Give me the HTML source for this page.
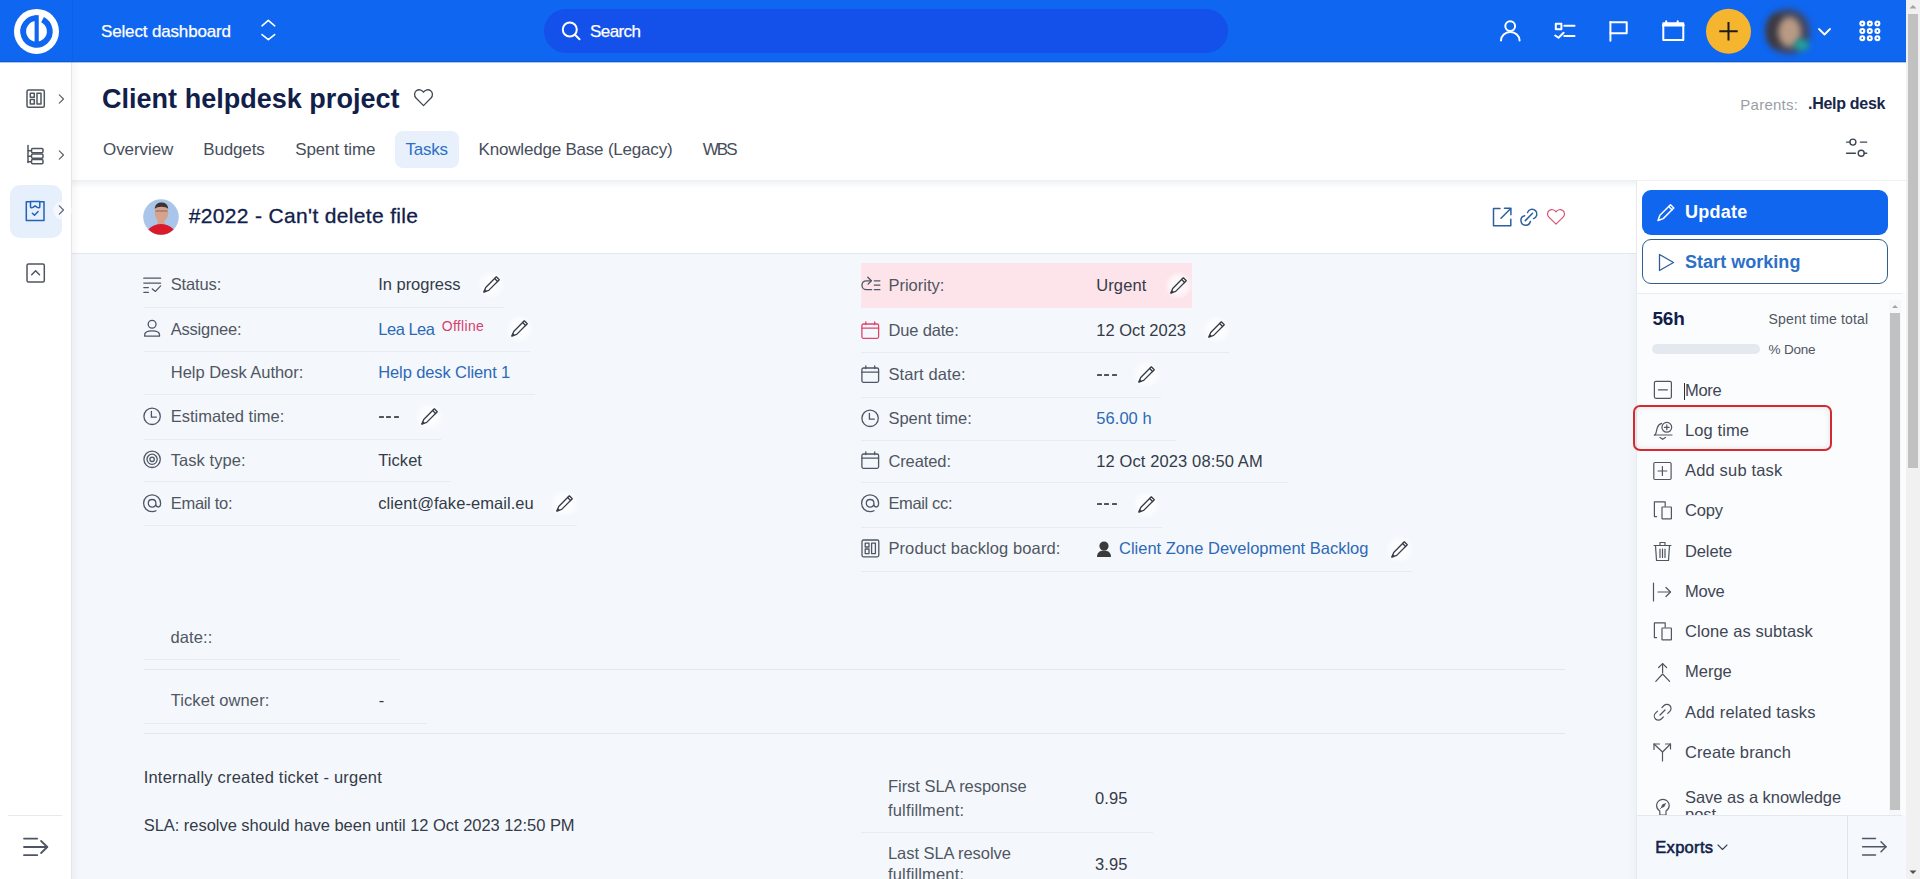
<!DOCTYPE html>
<html><head><meta charset="utf-8">
<style>
*{box-sizing:border-box;margin:0;padding:0}
html,body{width:1920px;height:879px;overflow:hidden;background:#fff;font-family:"Liberation Sans",sans-serif}
.a{position:absolute;white-space:nowrap}
svg{position:absolute;overflow:visible}
</style></head>
<body>
<div class="a" style="left:0px;top:0px;width:1906px;height:62px;background:#0f66f0;"></div>
<div class="a" style="left:544px;top:9px;width:684px;height:44px;background:#1450ea;border-radius:22px;"></div>
<div class="a" style="left:72px;top:0px;width:1px;height:62px;background:rgba(0,40,120,0.10);"></div>
<div class="a" style="left:0px;top:62px;width:72px;height:817px;background:#ffffff;"></div>
<div class="a" style="left:71px;top:62px;width:1px;height:817px;background:#e4e6ea;"></div>
<div class="a" style="left:72px;top:62px;width:1834px;height:118px;background:#ffffff;"></div>
<div class="a" style="left:72px;top:180px;width:1564px;height:699px;background:#f4f8fd;"></div>
<div class="a" style="left:72px;top:180px;width:1564px;height:73px;background:#ffffff;"></div>
<div class="a" style="left:72px;top:253px;width:1564px;height:1px;background:#e3e8ef;"></div>
<div class="a" style="left:72px;top:180px;width:1564px;height:8px;background:linear-gradient(#eef0f3,rgba(255,255,255,0));"></div>
<div class="a" style="left:1636px;top:180px;width:270px;height:699px;background:#fbfcfe;"></div>
<div class="a" style="left:1637px;top:180px;width:269px;height:113px;background:#ffffff;"></div>
<div class="a" style="left:1628px;top:253px;width:8px;height:626px;background:linear-gradient(90deg,rgba(0,0,0,0),rgba(0,0,0,0.025));"></div>
<div class="a" style="left:1636px;top:180px;width:1px;height:699px;background:#e6eaf0;"></div>
<div class="a" style="left:1637px;top:180px;width:269px;height:1px;background:#eef0f3;"></div>
<div class="a" style="left:1906px;top:0px;width:14px;height:879px;background:#f1f1f1;"></div>
<div class="a" style="left:0px;top:61px;width:1906px;height:1px;background:#0c5bd6;"></div>
<div class="a" style="left:0px;top:62px;width:1906px;height:1px;background:rgba(12,91,214,0.35);"></div>
<div class="a" style="left:72px;top:62px;width:8px;height:817px;background:linear-gradient(90deg,rgba(0,0,0,0.035),rgba(0,0,0,0));"></div>
<svg style="left:0;top:0" width="80" height="62" viewBox="0 0 80 62"><circle cx="36.5" cy="31.4" r="22.5" fill="#fff"/><path d="M36.5 18.1 A13.3 13.3 0 1 0 42.54 19.55" fill="none" stroke="#0f66f0" stroke-width="5.9"/><rect x="34.6" y="15.2" width="4.15" height="27" fill="#0f66f0"/></svg>
<div class="a" style="left:101.00px;top:23.11px;font-size:17px;line-height:17px;color:#ffffff;letter-spacing:-0.153px;font-weight:normal;-webkit-text-stroke:0.25px #fff;">Select dashboard</div>
<svg style="left:255px;top:15px" width="30" height="30" viewBox="0 0 30 30" fill="none" stroke="#ffffff" stroke-width="1.6" stroke-linecap="round" stroke-linejoin="round"><path d="M7 10.8 L13.3 5.4 L19.7 10.8"/><path d="M7 19.6 L13.3 24.7 L19.7 19.6"/></svg>
<svg style="left:555px;top:15px" width="35" height="35" viewBox="0 0 35 35" fill="none" stroke="#ffffff" stroke-width="2" stroke-linecap="round" stroke-linejoin="round"><circle cx="14.8" cy="14.5" r="7"/><path d="M20 19.8 L24.5 24.3"/></svg>
<div class="a" style="left:590.00px;top:23.11px;font-size:17px;line-height:17px;color:#ffffff;letter-spacing:-0.572px;-webkit-text-stroke:0.25px #fff;">Search</div>
<svg style="left:1495px;top:15px" width="30" height="30" viewBox="0 0 30 30" fill="none" stroke="#ffffff" stroke-width="2" stroke-linecap="round" stroke-linejoin="round"><circle cx="15.2" cy="11.1" r="4.9"/><path d="M6 25.6 A9.3 8.6 0 0 1 24.6 25.6"/></svg>
<svg style="left:1550px;top:15px" width="30" height="30" viewBox="0 0 30 30" fill="none" stroke="#ffffff" stroke-width="2" stroke-linecap="round" stroke-linejoin="round"><rect x="5.8" y="8.7" width="5.6" height="5.6"/><path d="M14.3 10.8 H24.5"/><path d="M14.3 20.9 H24.5"/><path d="M5.2 20.5 L8.5 22.8 L13.6 17.7"/></svg>
<svg style="left:1604px;top:15px" width="30" height="30" viewBox="0 0 30 30" fill="none" stroke="#ffffff" stroke-width="2" stroke-linecap="round" stroke-linejoin="round"><path d="M6.4 25.7 V7"/><path d="M6.4 7.2 H22.7 V18.2 H6.4"/></svg>
<svg style="left:1658px;top:15px" width="30" height="30" viewBox="0 0 30 30" fill="none" stroke="#ffffff" stroke-width="2" stroke-linecap="round" stroke-linejoin="round"><rect x="5.3" y="8.2" width="20" height="16.9"/><path d="M5.3 10.3 H25.3" stroke-width="2.6"/><path d="M8.2 6.2 V8.5"/><path d="M19.7 6.2 V8.5"/></svg>
<svg style="left:1700px;top:4px" width="56" height="56" viewBox="0 0 56 56"><circle cx="28.5" cy="27.3" r="22.5" fill="#f5b52f"/><path d="M19.3 27.3 H37.7 M28.5 18.1 V36.5" stroke="#1d1d1d" stroke-width="2"/></svg>
<div class="a" style="left:1766px;top:9px;width:44px;height:45px;border-radius:50%;background:#414660;filter:blur(3px)"></div>
<div class="a" style="left:1767px;top:14px;width:20px;height:34px;border-radius:50%;background:#3a3942;filter:blur(3px)"></div>
<div class="a" style="left:1778px;top:17px;width:23px;height:30px;border-radius:50%;background:#b99a83;filter:blur(3px)"></div>
<div class="a" style="left:1794px;top:39px;width:15px;height:12px;border-radius:50%;background:#1fa59c;filter:blur(3px)"></div>
<svg style="left:1815px;top:25px" width="20" height="14" viewBox="0 0 20 14" fill="none" stroke="#ffffff" stroke-width="1.8" stroke-linecap="round" stroke-linejoin="round"><path d="M4 4 L9.5 9.5 L15 4"/></svg>
<svg style="left:1855px;top:15px" width="30" height="30" viewBox="0 0 30 30" fill="none" stroke="#ffffff" stroke-width="2.1" stroke-linecap="round" stroke-linejoin="round"><circle cx="7.3" cy="8.6" r="1.95"/><circle cx="7.3" cy="16" r="1.95"/><circle cx="7.3" cy="23.2" r="1.95"/><circle cx="14.8" cy="8.6" r="1.95"/><circle cx="14.8" cy="16" r="1.95"/><circle cx="14.8" cy="23.2" r="1.95"/><circle cx="22.4" cy="8.6" r="1.95"/><circle cx="22.4" cy="16" r="1.95"/><circle cx="22.4" cy="23.2" r="1.95"/></svg>
<div class="a" style="left:10px;top:185px;width:52px;height:53px;background:#e6effc;border-radius:10px;"></div>
<svg style="left:22px;top:85px" width="28" height="28" viewBox="0 0 28 28" fill="none" stroke="#50565f" stroke-width="1.5" stroke-linecap="round" stroke-linejoin="round"><rect x="5" y="5" width="17.3" height="17.3" rx="1.5"/><rect x="8.3" y="8.3" width="4" height="4"/><rect x="8.3" y="14.5" width="4" height="4.5"/><rect x="15" y="8.3" width="4" height="10.7"/></svg>
<svg style="left:22px;top:141px" width="28" height="28" viewBox="0 0 28 28" fill="none" stroke="#50565f" stroke-width="1.5" stroke-linecap="round" stroke-linejoin="round"><path d="M6 4.5 V21.5"/><path d="M6 9.7 H9 M6 15.2 H9 M6 20.7 H9"/><rect x="9.5" y="7.5" width="11.5" height="4.2" rx="1.2"/><rect x="9.5" y="13" width="11.5" height="4.2" rx="1.2"/><rect x="9.5" y="18.5" width="11.5" height="4.2" rx="1.2"/></svg>
<div class="a" style="left:53px;top:201px;width:19px;height:19px;border-radius:50%;background:rgba(255,255,255,0.55)"></div>
<svg style="left:22px;top:197px" width="28" height="28" viewBox="0 0 28 28" fill="none" stroke="#2462b6" stroke-width="1.5" stroke-linecap="round" stroke-linejoin="round"><path d="M8.5 4.8 H4.3 V23.4 H22 V4.8 H17.8"/><path d="M8.5 4.5 V9.8 C8.5 11 10 11.2 11 10.3 L13.1 8.8 L15.3 10.3 C16.3 11.2 17.8 11 17.8 9.8 V4.5 Z"/><path d="M10.4 16.2 L12.5 18.3 L16.1 14.5"/></svg>
<svg style="left:22px;top:259px" width="28" height="28" viewBox="0 0 28 28" fill="none" stroke="#50565f" stroke-width="1.5" stroke-linecap="round" stroke-linejoin="round"><rect x="5" y="5" width="17.3" height="18" rx="1.5"/><path d="M9.7 15.7 L13.6 11.8 L17.5 15.7"/></svg>
<svg style="left:54px;top:89.8px" width="14" height="18" viewBox="0 0 14 18" fill="none" stroke="#60656e" stroke-width="1.2" stroke-linecap="round" stroke-linejoin="round"><path d="M5.3 4.8 L9.5 9 L5.3 13.2"/></svg>
<svg style="left:54px;top:145.8px" width="14" height="18" viewBox="0 0 14 18" fill="none" stroke="#60656e" stroke-width="1.2" stroke-linecap="round" stroke-linejoin="round"><path d="M5.3 4.8 L9.5 9 L5.3 13.2"/></svg>
<svg style="left:54px;top:201.3px" width="14" height="18" viewBox="0 0 14 18" fill="none" stroke="#60656e" stroke-width="1.2" stroke-linecap="round" stroke-linejoin="round"><path d="M5.3 4.8 L9.5 9 L5.3 13.2"/></svg>
<div class="a" style="left:8px;top:815px;width:54px;height:1px;background:#e5e8ed;"></div>
<svg style="left:20px;top:833px" width="32" height="28" viewBox="0 0 32 28" fill="none" stroke="#4f5663" stroke-width="1.8" stroke-linecap="round" stroke-linejoin="round"><path d="M4 5.6 H17.2"/><path d="M4 14 H27.3"/><path d="M4 22.2 H17.2"/><path d="M21.1 8 L27.3 14 L21.1 20"/></svg>
<div class="a" style="left:102.00px;top:86.34px;font-size:27px;line-height:27px;color:#10204a;font-weight:bold;letter-spacing:0.019px;">Client helpdesk project</div>
<svg style="left:413.5px;top:89.3px" width="19" height="17" viewBox="0 0 19 17" fill="none" stroke="#3e4654" stroke-width="1.3" stroke-linecap="round" stroke-linejoin="round"><path d="M9.5 16.6 L2 9 C0 7 0.1 3.3 2.3 1.7 C4.5 0.1 7.9 0.6 9.5 3.2 C11.1 0.6 14.5 0.1 16.7 1.7 C18.9 3.3 19 7 17 9 Z"/></svg>
<div class="a" style="left:1740.30px;top:96.80px;font-size:15px;line-height:15px;color:#999ea5;letter-spacing:0.246px;">Parents:</div>
<div class="a" style="left:1808.00px;top:95.96px;font-size:16px;line-height:16px;color:#17264a;font-weight:bold;letter-spacing:-0.290px;">.Help desk</div>
<div class="a" style="left:395px;top:131px;width:64px;height:37px;background:#e8f0fc;border-radius:8px;"></div>
<div class="a" style="left:103.00px;top:140.81px;font-size:17px;line-height:17px;color:#474e5b;letter-spacing:-0.078px;">Overview</div>
<div class="a" style="left:203.20px;top:140.81px;font-size:17px;line-height:17px;color:#474e5b;letter-spacing:-0.129px;">Budgets</div>
<div class="a" style="left:295.30px;top:140.81px;font-size:17px;line-height:17px;color:#474e5b;letter-spacing:-0.128px;">Spent time</div>
<div class="a" style="left:405.40px;top:140.81px;font-size:17px;line-height:17px;color:#2c6fc7;letter-spacing:-0.213px;">Tasks</div>
<div class="a" style="left:478.60px;top:140.81px;font-size:17px;line-height:17px;color:#474e5b;letter-spacing:-0.202px;">Knowledge Base (Legacy)</div>
<div class="a" style="left:702.70px;top:140.81px;font-size:17px;line-height:17px;color:#474e5b;letter-spacing:-1.867px;">WBS</div>
<svg style="left:1843px;top:135px" width="28" height="26" viewBox="0 0 28 26" fill="none" stroke="#3e4654" stroke-width="1.4" stroke-linecap="round" stroke-linejoin="round"><circle cx="9.9" cy="7.1" r="3"/><path d="M17.4 7.1 H23.7"/><path d="M3.6 18.2 H12.4"/><circle cx="18.2" cy="18.2" r="3"/><path d="M3.6 7.1 H6.9"/><path d="M21.2 18.2 H23.7"/></svg>
<svg style="left:143px;top:199px" width="36" height="36" viewBox="143 199 36 36"><defs><clipPath id="avc"><circle cx="161" cy="217" r="17.8"/></clipPath></defs><g clip-path="url(#avc)"><rect x="143" y="199" width="36" height="36" fill="#a9c6ea"/><ellipse cx="161" cy="240.5" rx="17" ry="16.5" fill="#d81a2a"/><rect x="157.5" y="218" width="7" height="6" fill="#d9a08c"/><ellipse cx="161.5" cy="213" rx="6.8" ry="8.6" fill="#d6a28c"/><path d="M154.8 209 C155 204 158 202.5 161.5 202.5 C165 202.5 168 204 168.2 209 C166 206 157 206 154.8 209 Z" fill="#3b3432"/><path d="M155.5 211 H167.5" stroke="#7a5f58" stroke-width="0.9"/></g></svg>
<div class="a" style="left:188.75px;top:205.22px;font-size:21px;line-height:21px;color:#10204a;letter-spacing:0.339px;-webkit-text-stroke:0.3px #10204a;">#2022 - Can't delete file</div>
<svg style="left:1488px;top:203px" width="28" height="26" viewBox="0 0 28 26" fill="none" stroke="#2d5f9f" stroke-width="1.5" stroke-linecap="round" stroke-linejoin="round"><path d="M12 5.5 H5.5 V22.8 H22.8 V16.3"/><path d="M13 15.2 L22.5 5.7"/><path d="M16.5 5.3 H22.9 V11.7"/></svg>
<svg style="left:1518px;top:206px" width="22" height="22" viewBox="0 0 22 22" fill="none" stroke="#2d5f9f" stroke-width="1.5" stroke-linecap="round" stroke-linejoin="round"><path d="M7.3 14.6 L14.6 7.3"/><path d="M6.6 9.7 A4.8 4.8 0 1 0 12.4 15.5"/><path d="M9.5 6.6 A4.8 4.8 0 1 1 15.5 12.6"/></svg>
<svg style="left:1547px;top:209px" width="18" height="16" viewBox="0 0 18 16" fill="none" stroke="#d9547b" stroke-width="1.2" stroke-linecap="round" stroke-linejoin="round"><path d="M9 15.2 L1.9 8.1 C0 6.2 0.1 3 2.2 1.5 C4.3 0 7.4 0.5 9 2.8 C10.6 0.5 13.7 0 15.8 1.5 C17.9 3 18 6.2 16.1 8.1 Z"/></svg>
<svg style="left:143px;top:274.7px" width="20" height="20" viewBox="0 0 20 20" fill="none" stroke="#4f5663" stroke-width="1.3" stroke-linecap="round" stroke-linejoin="round"><path d="M0.8 3.2 H17.6"/><path d="M0.8 8.1 H17.6"/><path d="M0.8 12.6 H5.4"/><path d="M0.8 17.3 H5.4"/><path d="M9.3 13.9 L12.5 16.4 L17.6 10.9"/></svg>
<div class="a" style="left:170.75px;top:275.93px;font-size:16.5px;line-height:16.5px;color:#50565f;letter-spacing:-0.138px;">Status:</div>
<div class="a" style="left:378.25px;top:275.93px;font-size:16.5px;line-height:16.5px;color:#353b47;letter-spacing:-0.032px;">In progress</div>
<div class="a" style="left:475.5px;top:269px;width:31px;height:31px;border-radius:50%;background:radial-gradient(circle,rgba(255,255,255,0.7) 35%,rgba(255,255,255,0) 65%)"></div>
<svg style="left:480.5px;top:274px" width="22" height="22" viewBox="0 0 22 22" fill="none" stroke="#353b45" stroke-width="1.3" stroke-linecap="round" stroke-linejoin="round"><path d="M3 18 L4.72 13.42 L15.32 2.82 L18.28 5.78 L7.68 16.38 Z"/><path d="M13.62 4.52 L16.58 7.48"/><path d="M3 18 L3.7 15.9 L5.1 17.3 Z" fill="#353b45"/></svg>
<div class="a" style="left:144px;top:307px;width:360px;height:1px;background:#e8ecf2;"></div>
<svg style="left:143px;top:319.8px" width="20" height="20" viewBox="0 0 20 20" fill="none" stroke="#4f5663" stroke-width="1.3" stroke-linecap="round" stroke-linejoin="round"><circle cx="9.1" cy="4.3" r="3.9"/><path d="M1.7 16.2 V14.8 C1.7 12.3 4.8 10.8 9.1 10.8 C13.4 10.8 16.5 12.3 16.5 14.8 V16.2 Z"/></svg>
<div class="a" style="left:170.75px;top:321.03px;font-size:16.5px;line-height:16.5px;color:#50565f;letter-spacing:-0.217px;">Assignee:</div>
<div class="a" style="left:378.25px;top:321.03px;font-size:16.5px;line-height:16.5px;color:#2d69b5;letter-spacing:-0.485px;">Lea Lea</div>
<div class="a" style="left:504px;top:313px;width:31px;height:31px;border-radius:50%;background:radial-gradient(circle,rgba(255,255,255,0.7) 35%,rgba(255,255,255,0) 65%)"></div>
<svg style="left:509px;top:318px" width="22" height="22" viewBox="0 0 22 22" fill="none" stroke="#353b45" stroke-width="1.3" stroke-linecap="round" stroke-linejoin="round"><path d="M3 18 L4.72 13.42 L15.32 2.82 L18.28 5.78 L7.68 16.38 Z"/><path d="M13.62 4.52 L16.58 7.48"/><path d="M3 18 L3.7 15.9 L5.1 17.3 Z" fill="#353b45"/></svg>
<div class="a" style="left:144px;top:351px;width:386px;height:1px;background:#e8ecf2;"></div>
<div class="a" style="left:170.75px;top:364.03px;font-size:16.5px;line-height:16.5px;color:#50565f;letter-spacing:-0.028px;">Help Desk Author:</div>
<div class="a" style="left:378.25px;top:364.03px;font-size:16.5px;line-height:16.5px;color:#2d69b5;letter-spacing:-0.110px;">Help desk Client 1</div>
<div class="a" style="left:144px;top:394px;width:391px;height:1px;background:#e8ecf2;"></div>
<svg style="left:143px;top:406.8px" width="20" height="20" viewBox="0 0 20 20" fill="none" stroke="#4f5663" stroke-width="1.3" stroke-linecap="round" stroke-linejoin="round"><circle cx="9.1" cy="9.3" r="8.2"/><path d="M8.4 4.3 V10.2 H13.3"/></svg>
<div class="a" style="left:170.75px;top:408.03px;font-size:16.5px;line-height:16.5px;color:#50565f;letter-spacing:-0.012px;">Estimated time:</div>
<div class="a" style="left:379.0px;top:416px;width:5.2px;height:2px;background:#50555f;border-radius:0.5px;"></div>
<div class="a" style="left:386.3px;top:416px;width:5.2px;height:2px;background:#50555f;border-radius:0.5px;"></div>
<div class="a" style="left:393.6px;top:416px;width:5.2px;height:2px;background:#50555f;border-radius:0.5px;"></div>
<div class="a" style="left:414.25px;top:401px;width:31px;height:31px;border-radius:50%;background:radial-gradient(circle,rgba(255,255,255,0.7) 35%,rgba(255,255,255,0) 65%)"></div>
<svg style="left:419.25px;top:406px" width="22" height="22" viewBox="0 0 22 22" fill="none" stroke="#353b45" stroke-width="1.3" stroke-linecap="round" stroke-linejoin="round"><path d="M3 18 L4.72 13.42 L15.32 2.82 L18.28 5.78 L7.68 16.38 Z"/><path d="M13.62 4.52 L16.58 7.48"/><path d="M3 18 L3.7 15.9 L5.1 17.3 Z" fill="#353b45"/></svg>
<div class="a" style="left:144px;top:439px;width:297px;height:1px;background:#e8ecf2;"></div>
<svg style="left:143px;top:450.3px" width="20" height="20" viewBox="0 0 20 20" fill="none" stroke="#4f5663" stroke-width="1.3" stroke-linecap="round" stroke-linejoin="round"><circle cx="9.1" cy="9.3" r="8.2"/><circle cx="9.1" cy="9.3" r="5.1"/><circle cx="9.1" cy="9.3" r="2.2"/></svg>
<div class="a" style="left:170.75px;top:451.53px;font-size:16.5px;line-height:16.5px;color:#50565f;letter-spacing:0.050px;">Task type:</div>
<div class="a" style="left:378.25px;top:451.53px;font-size:16.5px;line-height:16.5px;color:#353b47;letter-spacing:0.062px;">Ticket</div>
<div class="a" style="left:144px;top:481px;width:307px;height:1px;background:#e8ecf2;"></div>
<svg style="left:143px;top:493.55px" width="20" height="20" viewBox="0 0 20 20" fill="none" stroke="#4f5663" stroke-width="1.3" stroke-linecap="round" stroke-linejoin="round"><path d="M12.9 9.3 C12.9 11.5 11.3 13.1 9.1 13.1 C6.9 13.1 5.3 11.5 5.3 9.3 C5.3 7.1 6.9 5.5 9.1 5.5 C11.3 5.5 12.9 7.1 12.9 9.3 V10.6 C12.9 12 13.8 13 15.2 13 C16.8 13 17.6 11.5 17.6 9.3 C17.6 4.6 13.8 0.9 9.1 0.9 C4.4 0.9 0.6 4.6 0.6 9.3 C0.6 14 4.4 17.7 9.1 17.7 C10.6 17.7 11.9 17.4 13 16.8"/></svg>
<div class="a" style="left:170.75px;top:494.78px;font-size:16.5px;line-height:16.5px;color:#50565f;letter-spacing:-0.309px;">Email to:</div>
<div class="a" style="left:378.25px;top:494.78px;font-size:16.5px;line-height:16.5px;color:#353b47;letter-spacing:0.063px;">client@fake-email.eu</div>
<div class="a" style="left:548.75px;top:488px;width:31px;height:31px;border-radius:50%;background:radial-gradient(circle,rgba(255,255,255,0.7) 35%,rgba(255,255,255,0) 65%)"></div>
<svg style="left:553.75px;top:493px" width="22" height="22" viewBox="0 0 22 22" fill="none" stroke="#353b45" stroke-width="1.3" stroke-linecap="round" stroke-linejoin="round"><path d="M3 18 L4.72 13.42 L15.32 2.82 L18.28 5.78 L7.68 16.38 Z"/><path d="M13.62 4.52 L16.58 7.48"/><path d="M3 18 L3.7 15.9 L5.1 17.3 Z" fill="#353b45"/></svg>
<div class="a" style="left:144px;top:525px;width:433px;height:1px;background:#e8ecf2;"></div>
<div class="a" style="left:441.75px;top:319.15px;font-size:14px;line-height:14px;color:#d8416f;letter-spacing:0.299px;">Offline</div>
<div class="a" style="left:861px;top:263px;width:331px;height:45px;background:#fde4ea;"></div>
<svg style="left:861px;top:275.40000000000003px" width="20" height="20" viewBox="0 0 20 20" fill="none" stroke="#4f5663" stroke-width="1.3" stroke-linecap="round" stroke-linejoin="round"><path d="M10.3 5.8 H5.5 C2.8 5.8 1 7.7 1 10.2 C1 12.7 2.8 14.7 5.5 14.7 H10.6"/><path d="M6.8 2.2 L10.3 5.7 L7.1 9.1"/><path d="M13.3 5.8 H18.9 M13.3 10.1 H18.9 M13.3 14.7 H18.9"/></svg>
<div class="a" style="left:888.40px;top:276.63px;font-size:16.5px;line-height:16.5px;color:#50565f;">Priority:</div>
<div class="a" style="left:1096.25px;top:276.63px;font-size:16.5px;line-height:16.5px;color:#353b47;letter-spacing:0.097px;">Urgent</div>
<div class="a" style="left:1162.7px;top:269.6px;width:31px;height:31px;border-radius:50%;background:radial-gradient(circle,rgba(255,255,255,0.7) 35%,rgba(255,255,255,0) 65%)"></div>
<svg style="left:1167.7px;top:274.6px" width="22" height="22" viewBox="0 0 22 22" fill="none" stroke="#353b45" stroke-width="1.3" stroke-linecap="round" stroke-linejoin="round"><path d="M3 18 L4.72 13.42 L15.32 2.82 L18.28 5.78 L7.68 16.38 Z"/><path d="M13.62 4.52 L16.58 7.48"/><path d="M3 18 L3.7 15.9 L5.1 17.3 Z" fill="#353b45"/></svg>
<svg style="left:861px;top:320.5px" width="20" height="20" viewBox="0 0 20 20" fill="none" stroke="#e0446c" stroke-width="1.3" stroke-linecap="round" stroke-linejoin="round"><rect x="0.9" y="3" width="16.7" height="14.3" rx="1.5"/><path d="M0.9 7.2 H17.6"/><path d="M4.8 0.8 V3.5 M13.7 0.8 V3.5"/></svg>
<div class="a" style="left:888.40px;top:321.73px;font-size:16.5px;line-height:16.5px;color:#50565f;letter-spacing:-0.152px;">Due date:</div>
<div class="a" style="left:1096.25px;top:321.73px;font-size:16.5px;line-height:16.5px;color:#353b47;letter-spacing:-0.014px;">12 Oct 2023</div>
<div class="a" style="left:1201px;top:314px;width:31px;height:31px;border-radius:50%;background:radial-gradient(circle,rgba(255,255,255,0.7) 35%,rgba(255,255,255,0) 65%)"></div>
<svg style="left:1206px;top:319px" width="22" height="22" viewBox="0 0 22 22" fill="none" stroke="#353b45" stroke-width="1.3" stroke-linecap="round" stroke-linejoin="round"><path d="M3 18 L4.72 13.42 L15.32 2.82 L18.28 5.78 L7.68 16.38 Z"/><path d="M13.62 4.52 L16.58 7.48"/><path d="M3 18 L3.7 15.9 L5.1 17.3 Z" fill="#353b45"/></svg>
<div class="a" style="left:861px;top:352px;width:368px;height:1px;background:#e8ecf2;"></div>
<svg style="left:861px;top:364.7px" width="20" height="20" viewBox="0 0 20 20" fill="none" stroke="#4f5663" stroke-width="1.3" stroke-linecap="round" stroke-linejoin="round"><rect x="0.9" y="3" width="16.7" height="14.3" rx="1.5"/><path d="M0.9 7.2 H17.6"/><path d="M4.8 0.8 V3.5 M13.7 0.8 V3.5"/></svg>
<div class="a" style="left:888.40px;top:365.93px;font-size:16.5px;line-height:16.5px;color:#50565f;letter-spacing:0.112px;">Start date:</div>
<div class="a" style="left:1097.0px;top:374px;width:5.2px;height:2px;background:#50555f;border-radius:0.5px;"></div>
<div class="a" style="left:1104.3px;top:374px;width:5.2px;height:2px;background:#50555f;border-radius:0.5px;"></div>
<div class="a" style="left:1111.6px;top:374px;width:5.2px;height:2px;background:#50555f;border-radius:0.5px;"></div>
<div class="a" style="left:1131.4px;top:359px;width:31px;height:31px;border-radius:50%;background:radial-gradient(circle,rgba(255,255,255,0.7) 35%,rgba(255,255,255,0) 65%)"></div>
<svg style="left:1136.4px;top:364px" width="22" height="22" viewBox="0 0 22 22" fill="none" stroke="#353b45" stroke-width="1.3" stroke-linecap="round" stroke-linejoin="round"><path d="M3 18 L4.72 13.42 L15.32 2.82 L18.28 5.78 L7.68 16.38 Z"/><path d="M13.62 4.52 L16.58 7.48"/><path d="M3 18 L3.7 15.9 L5.1 17.3 Z" fill="#353b45"/></svg>
<div class="a" style="left:861px;top:397px;width:300px;height:1px;background:#e8ecf2;"></div>
<svg style="left:861px;top:408.5px" width="20" height="20" viewBox="0 0 20 20" fill="none" stroke="#4f5663" stroke-width="1.3" stroke-linecap="round" stroke-linejoin="round"><circle cx="9.1" cy="9.3" r="8.2"/><path d="M8.4 4.3 V10.2 H13.3"/></svg>
<div class="a" style="left:888.40px;top:409.73px;font-size:16.5px;line-height:16.5px;color:#50565f;">Spent time:</div>
<div class="a" style="left:1096.25px;top:409.73px;font-size:16.5px;line-height:16.5px;color:#2d69b5;letter-spacing:0.064px;">56.00 h</div>
<div class="a" style="left:861px;top:440px;width:315px;height:1px;background:#e8ecf2;"></div>
<svg style="left:861px;top:451.3px" width="20" height="20" viewBox="0 0 20 20" fill="none" stroke="#4f5663" stroke-width="1.3" stroke-linecap="round" stroke-linejoin="round"><rect x="0.9" y="3" width="16.7" height="14.3" rx="1.5"/><path d="M0.9 7.2 H17.6"/><path d="M4.8 0.8 V3.5 M13.7 0.8 V3.5"/></svg>
<div class="a" style="left:888.40px;top:452.53px;font-size:16.5px;line-height:16.5px;color:#50565f;letter-spacing:-0.095px;">Created:</div>
<div class="a" style="left:1096.25px;top:452.53px;font-size:16.5px;line-height:16.5px;color:#353b47;letter-spacing:0.115px;">12 Oct 2023 08:50 AM</div>
<div class="a" style="left:861px;top:482px;width:427px;height:1px;background:#e8ecf2;"></div>
<svg style="left:861px;top:494.2px" width="20" height="20" viewBox="0 0 20 20" fill="none" stroke="#4f5663" stroke-width="1.3" stroke-linecap="round" stroke-linejoin="round"><path d="M12.9 9.3 C12.9 11.5 11.3 13.1 9.1 13.1 C6.9 13.1 5.3 11.5 5.3 9.3 C5.3 7.1 6.9 5.5 9.1 5.5 C11.3 5.5 12.9 7.1 12.9 9.3 V10.6 C12.9 12 13.8 13 15.2 13 C16.8 13 17.6 11.5 17.6 9.3 C17.6 4.6 13.8 0.9 9.1 0.9 C4.4 0.9 0.6 4.6 0.6 9.3 C0.6 14 4.4 17.7 9.1 17.7 C10.6 17.7 11.9 17.4 13 16.8"/></svg>
<div class="a" style="left:888.40px;top:495.43px;font-size:16.5px;line-height:16.5px;color:#50565f;letter-spacing:-0.353px;">Email cc:</div>
<div class="a" style="left:1097.0px;top:503px;width:5.2px;height:2px;background:#50555f;border-radius:0.5px;"></div>
<div class="a" style="left:1104.3px;top:503px;width:5.2px;height:2px;background:#50555f;border-radius:0.5px;"></div>
<div class="a" style="left:1111.6px;top:503px;width:5.2px;height:2px;background:#50555f;border-radius:0.5px;"></div>
<div class="a" style="left:1131.4px;top:489px;width:31px;height:31px;border-radius:50%;background:radial-gradient(circle,rgba(255,255,255,0.7) 35%,rgba(255,255,255,0) 65%)"></div>
<svg style="left:1136.4px;top:494px" width="22" height="22" viewBox="0 0 22 22" fill="none" stroke="#353b45" stroke-width="1.3" stroke-linecap="round" stroke-linejoin="round"><path d="M3 18 L4.72 13.42 L15.32 2.82 L18.28 5.78 L7.68 16.38 Z"/><path d="M13.62 4.52 L16.58 7.48"/><path d="M3 18 L3.7 15.9 L5.1 17.3 Z" fill="#353b45"/></svg>
<div class="a" style="left:861px;top:527px;width:301px;height:1px;background:#e8ecf2;"></div>
<svg style="left:861px;top:539.0999999999999px" width="20" height="20" viewBox="0 0 20 20" fill="none" stroke="#4f5663" stroke-width="1.3" stroke-linecap="round" stroke-linejoin="round"><rect x="1" y="1" width="16.8" height="16.8" rx="1.5"/><rect x="4.2" y="4.2" width="3.8" height="3.8"/><rect x="4.2" y="10" width="3.8" height="4.6"/><rect x="10.6" y="4.2" width="3.8" height="10.4"/></svg>
<div class="a" style="left:888.40px;top:540.33px;font-size:16.5px;line-height:16.5px;color:#50565f;letter-spacing:0.108px;">Product backlog board:</div>
<div class="a" style="left:1119.00px;top:540.33px;font-size:16.5px;line-height:16.5px;color:#2d69b5;">Client Zone Development Backlog</div>
<div class="a" style="left:1383.6px;top:534px;width:31px;height:31px;border-radius:50%;background:radial-gradient(circle,rgba(255,255,255,0.7) 35%,rgba(255,255,255,0) 65%)"></div>
<svg style="left:1388.6px;top:539px" width="22" height="22" viewBox="0 0 22 22" fill="none" stroke="#353b45" stroke-width="1.3" stroke-linecap="round" stroke-linejoin="round"><path d="M3 18 L4.72 13.42 L15.32 2.82 L18.28 5.78 L7.68 16.38 Z"/><path d="M13.62 4.52 L16.58 7.48"/><path d="M3 18 L3.7 15.9 L5.1 17.3 Z" fill="#353b45"/></svg>
<div class="a" style="left:861px;top:571px;width:551px;height:1px;background:#e8ecf2;"></div>
<svg style="left:1096px;top:540px" width="17" height="19" viewBox="0 0 17 19"><circle cx="8" cy="6" r="4.6" fill="#3b3b3b"/><path d="M1 17 C1 12.5 4 10.5 8 10.5 C12 10.5 15 12.5 15 17 Z" fill="#3b3b3b"/></svg>
<div class="a" style="left:170.50px;top:628.63px;font-size:16.5px;line-height:16.5px;color:#50565f;letter-spacing:0.110px;">date::</div>
<div class="a" style="left:143.75px;top:659px;width:256px;height:1px;background:#e8ecf2;"></div>
<div class="a" style="left:143.75px;top:669px;width:1421px;height:1px;background:#e3e7ee;"></div>
<div class="a" style="left:170.70px;top:691.73px;font-size:16.5px;line-height:16.5px;color:#50565f;letter-spacing:0.093px;">Ticket owner:</div>
<div class="a" style="left:378.80px;top:691.73px;font-size:16.5px;line-height:16.5px;color:#353b47;">-</div>
<div class="a" style="left:143.75px;top:723px;width:283px;height:1px;background:#e8ecf2;"></div>
<div class="a" style="left:143.75px;top:733px;width:1421px;height:1px;background:#e3e7ee;"></div>
<div class="a" style="left:143.70px;top:769.33px;font-size:16.5px;line-height:16.5px;color:#353b47;letter-spacing:0.211px;">Internally created ticket - urgent</div>
<div class="a" style="left:143.70px;top:816.83px;font-size:16.5px;line-height:16.5px;color:#353b47;letter-spacing:-0.037px;">SLA: resolve should have been until 12 Oct 2023 12:50 PM</div>
<div class="a" style="left:888.00px;top:778.03px;font-size:16.5px;line-height:16.5px;color:#50565f;letter-spacing:-0.039px;">First SLA response</div>
<div class="a" style="left:888.00px;top:801.63px;font-size:16.5px;line-height:16.5px;color:#50565f;letter-spacing:0.158px;">fulfillment:</div>
<div class="a" style="left:1095.00px;top:789.63px;font-size:16.5px;line-height:16.5px;color:#353b47;letter-spacing:0.135px;">0.95</div>
<div class="a" style="left:861px;top:832px;width:292px;height:1px;background:#e8ecf2;"></div>
<div class="a" style="left:888.00px;top:844.73px;font-size:16.5px;line-height:16.5px;color:#50565f;letter-spacing:-0.065px;">Last SLA resolve</div>
<div class="a" style="left:888.00px;top:866.03px;font-size:16.5px;line-height:16.5px;color:#50565f;letter-spacing:0.158px;">fulfillment:</div>
<div class="a" style="left:1095.00px;top:855.63px;font-size:16.5px;line-height:16.5px;color:#353b47;letter-spacing:0.135px;">3.95</div>
<div class="a" style="left:1642px;top:190px;width:246px;height:45px;background:#1166ef;border-radius:9px;"></div>
<svg style="left:1655px;top:201px" width="24" height="24" viewBox="0 0 24 24" fill="none" stroke="#ffffff" stroke-width="1.5" stroke-linecap="round" stroke-linejoin="round"><path d="M3 19.5 L4.9 14.3 L15.5 3.7 L18.8 7 L8.2 17.6 Z"/><path d="M13.7 5.5 L17 8.8"/></svg>
<div class="a" style="left:1685.00px;top:202.86px;font-size:18px;line-height:18px;color:#ffffff;font-weight:bold;letter-spacing:0.234px;">Update</div>
<div class="a" style="left:1642px;top:239px;width:246px;height:45px;background:#ffffff;border-radius:9px;border:1.3px solid #2f5f92;"></div>
<svg style="left:1654px;top:250px" width="24" height="24" viewBox="0 0 24 24" fill="none" stroke="#2c5f99" stroke-width="1.3" stroke-linecap="round" stroke-linejoin="round"><path d="M5.5 4.5 L19.5 12.5 L5.5 20.5 Z"/></svg>
<div class="a" style="left:1685.00px;top:252.86px;font-size:18px;line-height:18px;color:#2c6fc7;font-weight:bold;letter-spacing:0.031px;">Start working</div>
<div class="a" style="left:1637px;top:293px;width:265px;height:1px;background:#e8ecf2;"></div>
<div class="a" style="left:1652.40px;top:308.82px;font-size:19px;line-height:19px;color:#10204a;font-weight:bold;letter-spacing:-0.117px;">56h</div>
<div class="a" style="left:1768.60px;top:312.35px;font-size:14px;line-height:14px;color:#50565f;letter-spacing:0.150px;">Spent time total</div>
<div class="a" style="left:1652px;top:344px;width:108px;height:10px;background:#e4e8ef;border-radius:5px;"></div>
<div class="a" style="left:1768.60px;top:342.97px;font-size:13.5px;line-height:13.5px;color:#50565f;letter-spacing:-0.209px;">% Done</div>
<div class="a" style="left:1633px;top:405px;width:199px;height:46px;background:transparent;border:2px solid #d42a2f;border-radius:7px;box-shadow:inset 0 0 6px rgba(0,0,0,0.10);"></div>
<svg style="left:1652px;top:380.40000000000003px" width="22" height="22" viewBox="0 0 22 22" fill="none" stroke="#50565f" stroke-width="1.2" stroke-linecap="round" stroke-linejoin="round"><rect x="2.4" y="1.3" width="17" height="17" rx="1.5"/><path d="M6.4 9.8 H15.4"/></svg>
<div class="a" style="left:1685.00px;top:381.63px;font-size:16.5px;line-height:16.5px;color:#3f4653;letter-spacing:-0.331px;">More</div>
<svg style="left:1652px;top:420.90000000000003px" width="22" height="22" viewBox="0 0 22 22" fill="none" stroke="#50565f" stroke-width="1.2" stroke-linecap="round" stroke-linejoin="round"><path d="M2.2 14 H20"/><path d="M2.9 14 C4.5 12.5 4.5 9 5.2 7 C5.8 5 7.5 3 9.6 2.4"/><circle cx="14.8" cy="6.3" r="4.9"/><path d="M14.8 3.9 V8.7 M12.4 6.3 H17.2"/><path d="M8 16.5 L10.7 18.3 L13.5 16.5"/></svg>
<div class="a" style="left:1685.00px;top:422.13px;font-size:16.5px;line-height:16.5px;color:#3f4653;letter-spacing:0.091px;">Log time</div>
<svg style="left:1652px;top:460.6px" width="22" height="22" viewBox="0 0 22 22" fill="none" stroke="#50565f" stroke-width="1.2" stroke-linecap="round" stroke-linejoin="round"><rect x="1.8" y="1.5" width="17.3" height="17" rx="1.2"/><path d="M10.4 5.5 V14.5 M6 10 H14.8"/></svg>
<div class="a" style="left:1685.00px;top:461.83px;font-size:16.5px;line-height:16.5px;color:#3f4653;letter-spacing:0.169px;">Add sub task</div>
<svg style="left:1652px;top:501.09999999999997px" width="22" height="22" viewBox="0 0 22 22" fill="none" stroke="#50565f" stroke-width="1.2" stroke-linecap="round" stroke-linejoin="round"><path d="M4.6 15.6 H2.4 V0.8 H13.2 V5.2"/><rect x="10" y="6" width="9.4" height="11.9" rx="0.5"/></svg>
<div class="a" style="left:1685.00px;top:502.33px;font-size:16.5px;line-height:16.5px;color:#3f4653;letter-spacing:-0.172px;">Copy</div>
<svg style="left:1652px;top:541.4px" width="22" height="22" viewBox="0 0 22 22" fill="none" stroke="#50565f" stroke-width="1.2" stroke-linecap="round" stroke-linejoin="round"><path d="M2 4.5 H19"/><path d="M8 4.5 V1.5 H13 V4.5"/><path d="M3.5 4.5 L4.5 19.5 H16.5 L17.5 4.5"/><path d="M8 8 V16.5 M10.5 8 V16.5 M13 8 V16.5"/></svg>
<div class="a" style="left:1685.00px;top:542.63px;font-size:16.5px;line-height:16.5px;color:#3f4653;letter-spacing:-0.117px;">Delete</div>
<svg style="left:1652px;top:581.6999999999999px" width="22" height="22" viewBox="0 0 22 22" fill="none" stroke="#50565f" stroke-width="1.2" stroke-linecap="round" stroke-linejoin="round"><path d="M1.5 1 V19"/><path d="M6 10 H18.5"/><path d="M14 5.5 L18.5 10 L14 14.5"/></svg>
<div class="a" style="left:1685.00px;top:582.93px;font-size:16.5px;line-height:16.5px;color:#3f4653;letter-spacing:-0.248px;">Move</div>
<svg style="left:1652px;top:621.8px" width="22" height="22" viewBox="0 0 22 22" fill="none" stroke="#50565f" stroke-width="1.2" stroke-linecap="round" stroke-linejoin="round"><path d="M4.6 15.6 H2.4 V0.8 H13.2 V5.2"/><rect x="10" y="6" width="9.4" height="11.9" rx="0.5"/></svg>
<div class="a" style="left:1685.00px;top:623.03px;font-size:16.5px;line-height:16.5px;color:#3f4653;letter-spacing:0.078px;">Clone as subtask</div>
<svg style="left:1652px;top:661.5px" width="22" height="22" viewBox="0 0 22 22" fill="none" stroke="#50565f" stroke-width="1.2" stroke-linecap="round" stroke-linejoin="round"><path d="M6.6 5.5 L10.6 1.6 L14.6 5.5"/><path d="M10.6 1.6 V10.5"/><path d="M3.8 19.3 L10.6 12 L17.6 19.3"/></svg>
<div class="a" style="left:1685.00px;top:662.73px;font-size:16.5px;line-height:16.5px;color:#3f4653;">Merge</div>
<svg style="left:1652px;top:702.3px" width="22" height="22" viewBox="0 0 22 22" fill="none" stroke="#50565f" stroke-width="1.2" stroke-linecap="round" stroke-linejoin="round"><path d="M8 13 L13 8"/><path d="M10 5.5 L12 3.5 C13.6 1.9 16.2 1.9 17.8 3.5 C19.4 5.1 19.4 7.7 17.8 9.3 L15.8 11.3"/><path d="M11.3 15 L9.3 17 C7.7 18.6 5.1 18.6 3.5 17 C1.9 15.4 1.9 12.8 3.5 11.2 L5.5 9.2"/></svg>
<div class="a" style="left:1685.00px;top:703.53px;font-size:16.5px;line-height:16.5px;color:#3f4653;letter-spacing:0.191px;">Add related tasks</div>
<svg style="left:1652px;top:742.3px" width="22" height="22" viewBox="0 0 22 22" fill="none" stroke="#50565f" stroke-width="1.2" stroke-linecap="round" stroke-linejoin="round"><path d="M10.5 19 V10 L2 2"/><path d="M10.5 10 L18.5 2"/><path d="M2 7.5 V2 H7.5"/><path d="M13.5 2 H18.5 V7"/></svg>
<div class="a" style="left:1685.00px;top:743.53px;font-size:16.5px;line-height:16.5px;color:#3f4653;letter-spacing:0.106px;">Create branch</div>
<svg style="left:1652px;top:797.4px" width="22" height="22" viewBox="0 0 22 22" fill="none" stroke="#50565f" stroke-width="1.2" stroke-linecap="round" stroke-linejoin="round"><path d="M7.8 14 C5.8 12.8 4.6 10.8 4.6 8.6 C4.6 5.1 7.4 2.3 10.9 2.3 C14.4 2.3 17.2 5.1 17.2 8.6 C17.2 10.8 16 12.8 14 14 V18 H7.8 Z"/><path d="M8.5 11.5 L13.5 6.5" stroke-width="1"/><path d="M9.3 10.5 C9.3 8 10.8 6.5 13.5 6.5 C13.5 9.2 12 10.7 9.3 10.7 Z" fill="#4f5663" stroke="none"/></svg>
<div class="a" style="left:1685.00px;top:788.63px;font-size:16.5px;line-height:16.5px;color:#3f4653;letter-spacing:-0.039px;">Save as a knowledge</div>
<div class="a" style="left:1683.5px;top:383px;width:1.2px;height:17px;background:#2a2f38;"></div>
<div class="a" style="left:1637px;top:806px;width:252px;height:9px;overflow:hidden"><div class="a" style="left:48px;top:-0.47px;font-size:16.5px;line-height:16.5px;color:#3f4653">post</div></div>
<div class="a" style="left:1889px;top:300px;width:12px;height:515px;background:#f6f7f9;"></div>
<div class="a" style="left:1890px;top:313px;width:10px;height:497px;background:#c1c1c1;"></div>
<svg style="left:1890px;top:302px" width="10" height="8" viewBox="0 0 10 8"><path d="M2 6 L5 3 L8 6 Z" fill="#a3a3a3"/></svg>
<div class="a" style="left:1637px;top:815px;width:269px;height:64px;background:#f5f8fc;"></div>
<div class="a" style="left:1637px;top:815px;width:265px;height:1px;background:#e4e8ee;"></div>
<div class="a" style="left:1847px;top:815px;width:1px;height:64px;background:#e1e5eb;"></div>
<div class="a" style="left:1655.30px;top:838.93px;font-size:16.5px;line-height:16.5px;color:#10204a;letter-spacing:0.296px;-webkit-text-stroke:0.55px #10204a;">Exports</div>
<svg style="left:1714px;top:840px" width="18" height="14" viewBox="0 0 18 14" fill="none" stroke="#3a4256" stroke-width="1.1" stroke-linecap="round" stroke-linejoin="round"><path d="M4 5 L8.5 9.5 L13 5"/></svg>
<svg style="left:1859px;top:834px" width="32" height="26" viewBox="0 0 32 26" fill="none" stroke="#4f5663" stroke-width="1.5" stroke-linecap="round" stroke-linejoin="round"><path d="M3.6 4.5 H16.5"/><path d="M3.6 12.8 H27"/><path d="M3.6 21.1 H16.5"/><path d="M22 7.8 L27 12.8 L22 17.8"/></svg>
<div class="a" style="left:1908px;top:14px;width:10px;height:454px;background:#c1c1c1;"></div>
<svg style="left:1906px;top:0" width="14" height="14" viewBox="0 0 14 14"><path d="M3.5 8.5 L7 5 L10.5 8.5 Z" fill="#a3a3a3"/></svg>
<svg style="left:1906px;top:865px" width="14" height="14" viewBox="0 0 14 14"><path d="M3.5 5.5 L7 9 L10.5 5.5 Z" fill="#505050"/></svg>
</body></html>
